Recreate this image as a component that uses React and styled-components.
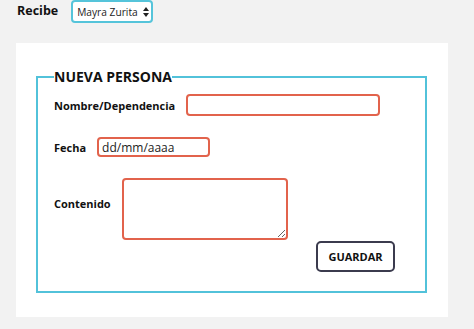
import React from "react";
import styled, { createGlobalStyle } from "styled-components";

const GlobalStyle = createGlobalStyle`
  body {
    margin: 0;
    background: #f2f2f2;
    font-family: "Open Sans", "Liberation Sans", sans-serif;
    color: #111;
  }
`;

const App = () => {
  return (
    <Page>
      <GlobalStyle />
      <TopBar>
        <TopLabel>Recibe</TopLabel>
        <SelectWrap>
          <Select defaultValue="mayra">
            <option value="mayra">Mayra Zurita</option>
          </Select>
          <SelectArrows width="6" height="10" viewBox="0 0 6 10">
            <path d="M3 0 L6 4 L0 4 Z" fill="#222" />
            <path d="M0 6 L6 6 L3 10 Z" fill="#222" />
          </SelectArrows>
        </SelectWrap>
      </TopBar>
      <Panel>
        <Fieldset>
          <Legend>NUEVA PERSONA</Legend>
          <Field $spacing={21}>
            <Label>Nombre/Dependencia</Label>
            <TextInput type="text" $width={194} $height={22} />
          </Field>
          <Field $spacing={21}>
            <Label>Fecha</Label>
            <TextInput type="text" placeholder="dd/mm/aaaa" $width={113} $height={20} />
          </Field>
          <Field $spacing={1} $align="flex-start">
            <Label $offset={18}>Contenido</Label>
            <TextArea />
          </Field>
          <Actions>
            <Button type="button">GUARDAR</Button>
          </Actions>
        </Fieldset>
      </Panel>
    </Page>
  );
};

export default App;

const Page = styled.div`
  width: 474px;
  height: 329px;
  overflow: hidden;
`;

const TopBar = styled.div`
  display: flex;
  align-items: flex-start;
  gap: 13px;
  height: 24px;
  padding-left: 17px;
`;

const TopLabel = styled.span`
  font-weight: 700;
  font-size: 12.5px;
  line-height: 22px;
`;

const SelectWrap = styled.div`
  position: relative;
  display: flex;
`;

const Select = styled.select`
  appearance: none;
  box-sizing: border-box;
  width: 82px;
  height: 23px;
  margin: 0;
  padding: 0 12px 0 4px;
  border: 2px solid #55c4da;
  border-radius: 4px;
  background: #fff;
  font-family: "Open Sans", "Liberation Sans", sans-serif;
  font-size: 10.2px;
  color: #222;
  outline: none;
`;

const SelectArrows = styled.svg`
  position: absolute;
  right: 4px;
  top: 7px;
  pointer-events: none;
`;

const Panel = styled.div`
  box-sizing: border-box;
  width: 432px;
  height: 274px;
  margin: 19px 0 0 16px;
  padding: 24px 21px 24px 20px;
  background: #fff;
`;

const Fieldset = styled.fieldset`
  box-sizing: border-box;
  height: 100%;
  margin: 0;
  padding: 7px 30px 0 16px;
  border: 2px solid #52c2da;
`;

const Legend = styled.legend`
  padding: 0;
  font-weight: 700;
  font-size: 14px;
  line-height: 20px;
  color: #111;
`;

const Field = styled.div`
  display: flex;
  align-items: ${(p) => p.$align || "center"};
  margin-bottom: ${(p) => p.$spacing}px;
`;

const Label = styled.label`
  margin-right: 11px;
  padding-top: ${(p) => p.$offset || 0}px;
  font-weight: 700;
  font-size: 11px;
  color: #111;
`;

const TextInput = styled.input`
  box-sizing: border-box;
  width: ${(p) => p.$width}px;
  height: ${(p) => p.$height}px;
  padding: 0 3px;
  border: 2px solid #e2634c;
  border-radius: 4px;
  font-family: "Open Sans", "Liberation Sans", sans-serif;
  font-size: 12px;
  color: #222;
  outline: none;

  &::placeholder {
    color: #222;
  }
`;

const TextArea = styled.textarea`
  box-sizing: border-box;
  width: 166px;
  height: 62px;
  border: 2px solid #e2634c;
  border-radius: 4px;
  outline: none;
  font-family: "Open Sans", "Liberation Sans", sans-serif;
`;

const Actions = styled.div`
  display: flex;
  justify-content: flex-end;
`;

const Button = styled.button`
  box-sizing: border-box;
  width: 79px;
  height: 31px;
  border: 2px solid #3b3b4e;
  border-radius: 5px;
  background: #fff;
  font-family: "Open Sans", "Liberation Sans", sans-serif;
  font-weight: 700;
  font-size: 11px;
  color: #111;
  cursor: pointer;
`;
